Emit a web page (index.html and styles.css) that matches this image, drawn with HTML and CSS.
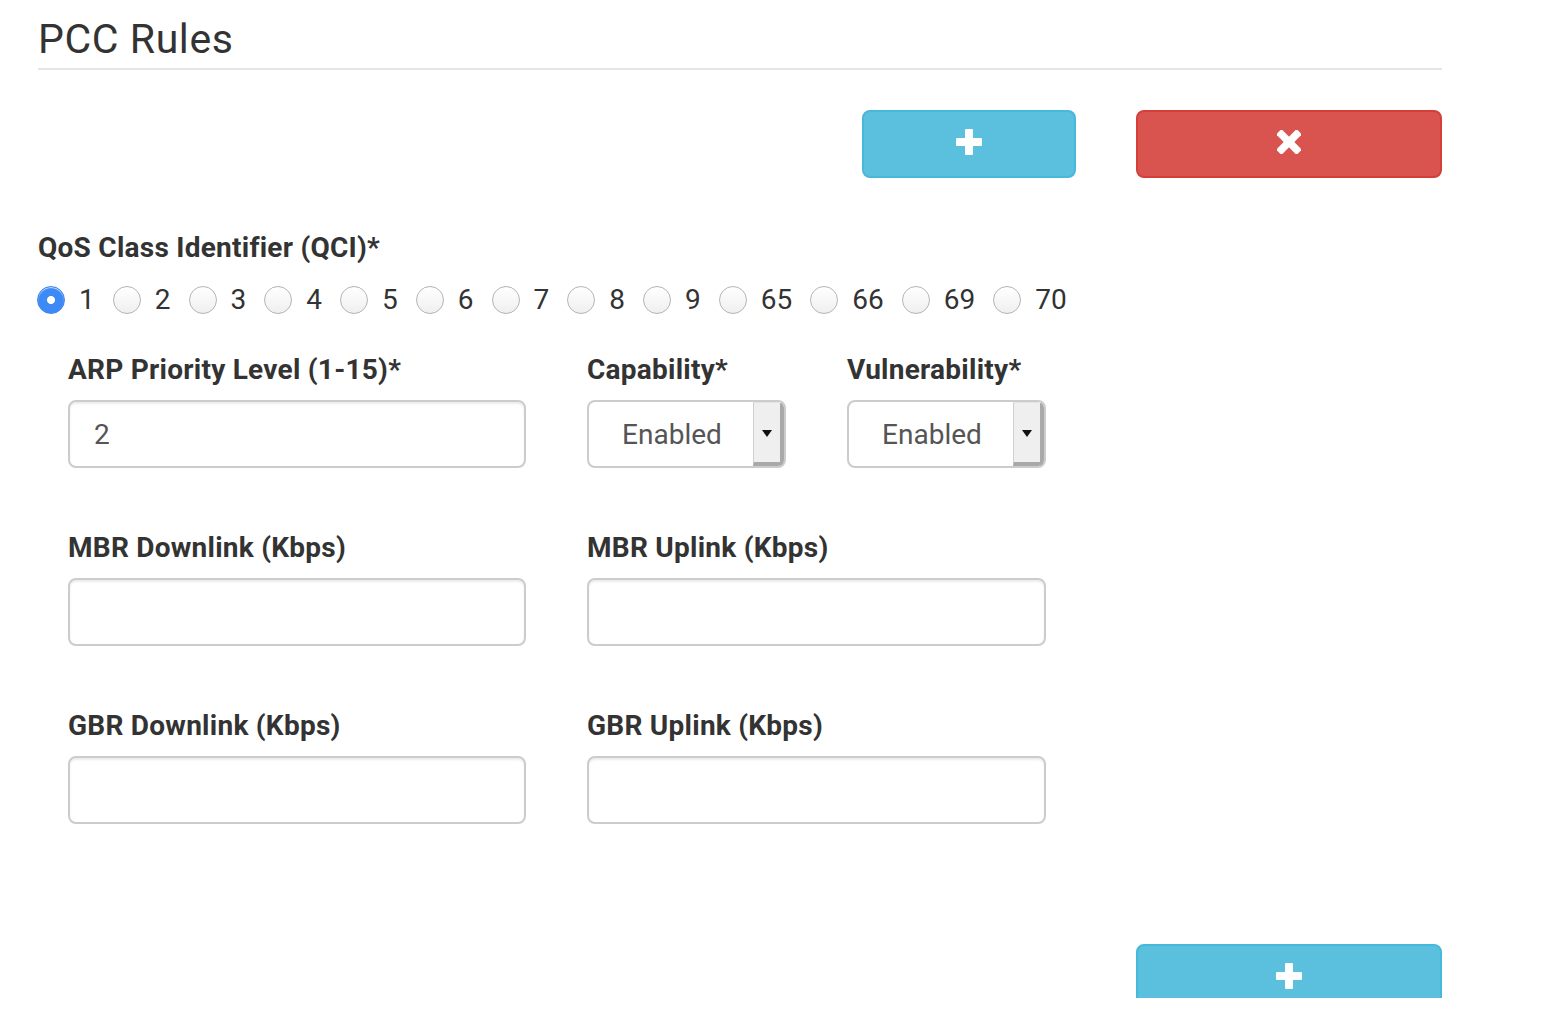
FILE: index.html
```html
<!DOCTYPE html>
<html lang="en">
<head>
<meta charset="utf-8">
<title>PCC Rules</title>
<link rel="stylesheet" href="styles.css">
</head>
<body>
<div class="page">
  <h2 class="title">PCC Rules</h2>

  <div class="actions">
    <button class="btn btn-info btn-add" type="button" aria-label="Add">
      <svg class="ico" width="26" height="26" viewBox="0 0 26 26"><rect x="9" y="0" width="8" height="26" rx="1" fill="#fff"/><rect x="0" y="9" width="26" height="8" rx="1" fill="#fff"/></svg>
    </button>
    <button class="btn btn-danger btn-remove" type="button" aria-label="Remove">
      <svg class="ico" width="24" height="24" viewBox="0 0 24 24"><g transform="rotate(45 12 12)" fill="#fff"><rect x="8.2" y="-2.5" width="7.6" height="29"/><rect x="-2.5" y="8.2" width="29" height="7.6"/></g></svg>
    </button>
  </div>

  <div class="qci">
    <div class="label">QoS Class Identifier (QCI)*</div>
    <div class="radios">
      <label class="radio"><input type="radio" name="qci" checked><span>1</span></label>
      <label class="radio"><input type="radio" name="qci"><span>2</span></label>
      <label class="radio"><input type="radio" name="qci"><span>3</span></label>
      <label class="radio"><input type="radio" name="qci"><span>4</span></label>
      <label class="radio"><input type="radio" name="qci"><span>5</span></label>
      <label class="radio"><input type="radio" name="qci"><span>6</span></label>
      <label class="radio"><input type="radio" name="qci"><span>7</span></label>
      <label class="radio"><input type="radio" name="qci"><span>8</span></label>
      <label class="radio"><input type="radio" name="qci"><span>9</span></label>
      <label class="radio"><input type="radio" name="qci"><span>65</span></label>
      <label class="radio"><input type="radio" name="qci"><span>66</span></label>
      <label class="radio"><input type="radio" name="qci"><span>69</span></label>
      <label class="radio"><input type="radio" name="qci"><span>70</span></label>
    </div>
  </div>

  <div class="fields">
    <div class="field">
      <div class="label">ARP Priority Level (1-15)*</div>
      <input class="input" type="text" value="2">
    </div>
    <div class="field">
      <div class="label">Capability*</div>
      <div class="select"><span class="select-text">Enabled</span><span class="select-btn"><span class="caret"></span></span></div>
    </div>
    <div class="field">
      <div class="label">Vulnerability*</div>
      <div class="select"><span class="select-text">Enabled</span><span class="select-btn"><span class="caret"></span></span></div>
    </div>

    <div class="field">
      <div class="label">MBR Downlink (Kbps)</div>
      <input class="input" type="text">
    </div>
    <div class="field span2">
      <div class="label">MBR Uplink (Kbps)</div>
      <input class="input" type="text">
    </div>

    <div class="field">
      <div class="label">GBR Downlink (Kbps)</div>
      <input class="input" type="text">
    </div>
    <div class="field span2">
      <div class="label">GBR Uplink (Kbps)</div>
      <input class="input" type="text">
    </div>
  </div>

  <div class="footer">
    <button class="btn btn-info btn-add-rule" type="button" aria-label="Add rule">
      <svg class="ico" width="26" height="26" viewBox="0 0 26 26"><rect x="9" y="0" width="8" height="26" rx="1" fill="#fff"/><rect x="0" y="9" width="26" height="8" rx="1" fill="#fff"/></svg>
    </button>
  </div>
</div>
</body>
</html>
```
FILE: styles.css
```css
* { box-sizing: border-box; }

html, body {
  margin: 0;
  padding: 0;
  background: #fff;
}

body {
  font-family: Roboto, "Liberation Sans", Arial, sans-serif;
  color: #333;
}

.page {
  width: 1442px;
  height: 998px;
  overflow: hidden;
  padding-left: 38px;
}

.title {
  margin: 0;
  padding-top: 17px;
  padding-bottom: 7px;
  font-size: 41px;
  line-height: 44px;
  font-weight: 400;
  letter-spacing: 0.6px;
  color: #333;
  border-bottom: 2px solid #e5e5e5;
}

.actions {
  margin-top: 40px;
  display: flex;
  justify-content: flex-end;
  gap: 60px;
}

.btn {
  height: 68px;
  border-radius: 8px;
  border: 2px solid transparent;
  padding: 0;
  display: flex;
  align-items: flex-start;
  justify-content: center;
  padding-top: 17px;
  cursor: pointer;
}

.btn-info {
  background: #5bc0de;
  border-color: #46b8da;
}

.btn-danger {
  background: #d9534f;
  border-color: #d43f3a;
}

.btn-add { width: 214px; }
.btn-remove { width: 306px; padding-top: 18px; }

.ico { display: block; }

.qci {
  margin-top: 50px;
}

.label {
  font-size: 28px;
  line-height: 40px;
  font-weight: 700;
  letter-spacing: 0.25px;
  color: #333;
}

.radios {
  margin-top: 12px;
  display: flex;
  align-items: center;
  margin-left: -1px;
}

.radio {
  display: flex;
  align-items: center;
  gap: 14px;
  margin-right: 18px;
  font-size: 28px;
  line-height: 40px;
  color: #333;
}

.radio input {
  appearance: none;
  -webkit-appearance: none;
  width: 28px;
  height: 28px;
  margin: 0;
  border-radius: 50%;
  border: 1px solid #b4b4b4;
  background: linear-gradient(#ffffff, #efefef);
  box-shadow: inset 0 1px 1px rgba(255,255,255,0.8);
}

.radio input:checked {
  border-color: #3b86f5;
  background: radial-gradient(circle, #fff 0, #fff 3.6px, #3d89f6 4.4px, #3d89f6 100%);
}

.fields {
  margin-top: 30px;
  padding-left: 30px;
  display: grid;
  grid-template-columns: 458px 199px 199px;
  column-gap: 61px;
  row-gap: 60px;
}

.field .label {
  margin-bottom: 10px;
}

.span2 {
  grid-column: 2 / 4;
}

.input {
  display: block;
  width: 100%;
  height: 68px;
  border: 2px solid #ccc;
  border-radius: 8px;
  padding: 0 24px;
  font-family: Roboto, "Liberation Sans", Arial, sans-serif;
  font-size: 28px;
  color: #555;
  background: #fff;
  box-shadow: inset 0 2px 2px rgba(0,0,0,0.075);
  outline: none;
}

.select {
  display: flex;
  height: 68px;
  border: 2px solid #ccc;
  border-radius: 8px;
  background: #fff;
  overflow: hidden;
}

.select-text {
  flex: 1;
  display: flex;
  align-items: center;
  justify-content: center;
  font-size: 28px;
  color: #555;
  padding-left: 2px;
}

.select-btn {
  width: 31px;
  background: #efefef;
  border-left: 1px solid #d0d0d0;
  border-top: 1px solid #e4e4e4;
  border-right: 4px solid #a9a9a9;
  border-bottom: 4px solid #a9a9a9;
  display: flex;
  align-items: center;
  justify-content: center;
}

.caret {
  width: 0;
  height: 0;
  border-left: 5px solid transparent;
  border-right: 5px solid transparent;
  border-top: 7px solid #111;
  margin-top: 1px;
}

.footer {
  margin-top: 120px;
  display: flex;
  justify-content: flex-end;
}

.btn-add-rule {
  width: 306px;
}
```
